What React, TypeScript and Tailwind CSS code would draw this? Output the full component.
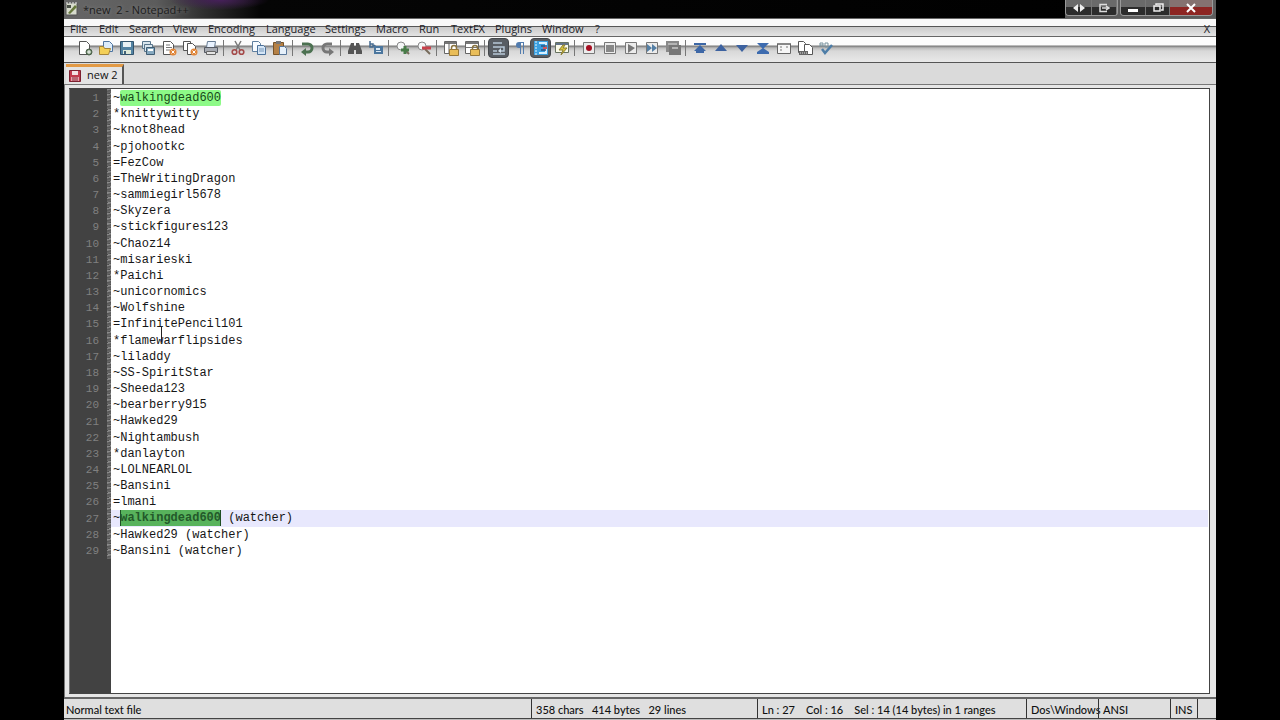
import React from "react";

const MENU: { label: string; width: string }[] = [
  { label: "File", width: "w-[29px]" },
  { label: "Edit", width: "w-[30px]" },
  { label: "Search", width: "w-[44px]" },
  { label: "View", width: "w-[35px]" },
  { label: "Encoding", width: "w-[58px]" },
  { label: "Language", width: "w-[59px]" },
  { label: "Settings", width: "w-[51px]" },
  { label: "Macro", width: "w-[43px]" },
  { label: "Run", width: "w-[32px]" },
  { label: "TextFX", width: "w-[44px]" },
  { label: "Plugins", width: "w-[47px]" },
  { label: "Window", width: "w-[53px]" },
  { label: "?", width: "w-[20px]" },
];

const LINES = [
  "~walkingdead600",
  "*knittywitty",
  "~knot8head",
  "~pjohootkc",
  "=FezCow",
  "=TheWritingDragon",
  "~sammiegirl5678",
  "~Skyzera",
  "~stickfigures123",
  "~Chaoz14",
  "~misarieski",
  "*Paichi",
  "~unicornomics",
  "~Wolfshine",
  "=InfinitePencil101",
  "*flamewarflipsides",
  "~liladdy",
  "~SS-SpiritStar",
  "~Sheeda123",
  "~bearberry915",
  "~Hawked29",
  "~Nightambush",
  "*danlayton",
  "~LOLNEARLOL",
  "~Bansini",
  "=lmani",
  "~walkingdead600 (watcher)",
  "~Hawked29 (watcher)",
  "~Bansini (watcher)",
];

const page = <path d="M2.500 1.500h7l3 3v10h-10z" fill="#fff" stroke="#555" />;
const square = <path d="M2.500 2.500h11v11h-11z" fill="#ececec" stroke="#777" />;
const lock = (
  <>
    <path d="M8.500 10V8a2.500 2.500 0 0 1 5 0v2" fill="none" stroke="#8a7440" strokeWidth="1.500" />
    <path d="M6.500 9.500h9v6h-9z" fill="#e9bd58" stroke="#96783a" />
  </>
);
const disk = (
  <>
    <path d="M1.500 1.500h13v13h-13z" fill="#5383a3" stroke="#33546d" />
    <path d="M4 2h8v5H4z" fill="#e8f1f5" />
    <path d="M4 10h8v4H4z" fill="#dfe9d9" />
    <path d="M5 11h2v3H5z" fill="#436277" />
  </>
);

type Tool = { name: string; art: React.ReactNode; pressed?: boolean };

const GROUPS: Tool[][] = [
  [
    { name: "New", art: <>{page}<circle cx="12" cy="12" r="3" fill="#6d8a6a" stroke="#4b5f4a" /><path d="M12 10v4M10 12h4" stroke="#fff" /></> },
    { name: "Open", art: <><path d="M5.500 1.500h6l3 3v7h-9z" fill="#dcecfb" stroke="#4f75a0" /><path d="M1.500 6.500h4l1 2h6l-2 6h-9z" fill="#f3cf57" stroke="#a5843a" /></> },
    { name: "Save", art: disk },
    { name: "Save all", art: <><path d="M2.500 1.500h8v7h-8z" fill="#d9e6ee" stroke="#58758b" /><path d="M4.500 4.500h8v7h-8z" fill="#d9e6ee" stroke="#58758b" /><path d="M6.500 7.500h8v7h-8z" fill="#86a9c0" stroke="#405d73" /><path d="M8 9h5v2H8z" fill="#fff" /></> },
    { name: "Close", art: <>{page}<path d="M5 5h4M5 7.500h6M5 10h4" stroke="#777" /><circle cx="12" cy="12" r="3.500" fill="#e08538" /><path d="m10.500 10.500 3 3m0-3-3 3" stroke="#fff" /></> },
    { name: "Close all", art: <><path d="M1.500 1.500h7v9h-7z" fill="#fff" stroke="#555" /><path d="M5.500 3.500h5l3 3v8h-8z" fill="#fff" stroke="#555" /><circle cx="12" cy="12" r="3.500" fill="#e08538" /><path d="m10.500 10.500 3 3m0-3-3 3" stroke="#fff" /></> },
    { name: "Print", art: <><path d="M4.500 1.500h8l-1 6h-8z" fill="#eaf3ff" stroke="#667b92" /><path d="M1.500 7.500h13v5h-13z" fill="#a6aab2" stroke="#555a63" /><path d="M3.500 11.500h9v3h-9z" fill="#e4e4e4" stroke="#666" /></> },
  ],
  [
    { name: "Cut", art: <><path d="m5 1 5 9m1-9-5 9" stroke="#777" strokeWidth="1.500" /><circle cx="4.500" cy="12" r="2.300" fill="none" stroke="#a44949" strokeWidth="1.600" /><circle cx="11.500" cy="12" r="2.300" fill="none" stroke="#a44949" strokeWidth="1.600" /></> },
    { name: "Copy", art: <><path d="M1.500 1.500h6l2 2v8h-8z" fill="#f7fbff" stroke="#5f7f9f" /><path d="M6.500 5.500h6l2 2v7h-8z" fill="#d4e5f6" stroke="#4b719a" /><path d="M8 9h5M8 11h5" stroke="#7797b8" /></> },
    { name: "Paste", art: <><path d="M1.500 2.500h10v12h-10z" fill="#b58146" stroke="#765229" /><path d="M4 1h5v3H4z" fill="#777" /><path d="M7.500 6.500h5l2 2v6h-7z" fill="#e6f0fa" stroke="#587699" /></> },
  ],
  [
    { name: "Undo", art: <><path d="M3 4h6a4 4 0 0 1 0 8H6" fill="none" stroke="#4c7151" strokeWidth="3" /><path d="M7 8v8l-5-4z" fill="#4c7151" /></> },
    { name: "Redo", art: <><path d="M12 4H7a4 4 0 0 0 0 8h3" fill="none" stroke="#777" strokeWidth="3" /><path d="M9 8v8l5-4z" fill="#777" /></> },
  ],
  [
    { name: "Find", art: <path d="M4 3h3v3h2V3h3l3 8v3H9v-4H7v4H1v-3z" fill="#555" /> },
    { name: "Replace", art: <><path d="M2 1v6h3V4H2m4 1 3 3" fill="none" stroke="#44698e" strokeWidth="1.500" /><path d="M6 6h9v8H6z" fill="#4b769e" /><path d="M8 8h4v2H8zm0 3h5v1H8z" fill="#dce9f5" /></> },
  ],
  [
    { name: "Zoom in", art: <><circle cx="6" cy="6" r="4" fill="#f4f6f7" stroke="#888" /><path d="m9 9 5 5" stroke="#776b5b" strokeWidth="2" /><path d="M10 6v8M6 10h8" stroke="#477b48" strokeWidth="3" /></> },
    { name: "Zoom out", art: <><circle cx="6" cy="6" r="4" fill="#f4f6f7" stroke="#888" /><path d="m9 9 5 5" stroke="#776b5b" strokeWidth="2" /><path d="M6 8h9" stroke="#c8414b" strokeWidth="3" /></> },
  ],
  [
    { name: "Synchronize vertical scrolling", art: <><path d="M1.500 1.500h12v12h-12z" fill="#fff" stroke="#666" /><path d="M2 2h11v2H2z" fill="#777" /><path d="M6 3v10" stroke="#666" />{lock}</> },
    { name: "Synchronize horizontal scrolling", art: <><path d="M1.500 1.500h13v12h-13z" fill="#fff" stroke="#666" /><path d="M2 2h12v2H2zM2 7h12v1H2z" fill="#777" />{lock}</> },
  ],
  [
    { name: "Word wrap", pressed: true, art: <><path d="M2 3h9M2 7h11v4H8M2 11h4M2 14h12" fill="none" stroke="#b7c8d8" strokeWidth="1.500" /><path d="m10 8-3 3 3 2z" fill="#d2dfeb" /></> },
    { name: "Show all characters", art: <path d="M12 2H7a3 3 0 0 0 0 6h1v6h1V3h2v11h1z" fill="#527cae" /> },
    { name: "Show indent guide", pressed: true, art: <><path d="M1 1h14v14H1z" fill="#3a9fe0" /><path d="M3 1v14" stroke="#e5f6ff" strokeDasharray="2 1" /><path d="M6 3h7v10H6" fill="none" stroke="#d5efff" strokeWidth="2" /><path d="M8 6h6M8 10h5" stroke="#2c5480" strokeWidth="1.500" /><path d="M10 7h4v2h-4z" fill="#d65359" /></> },
    { name: "User defined language", art: <><path d="M1.500 2.500h13v10h-13z" fill="#fbfbe9" stroke="#677260" /><path d="M2 3h12v2H2z" fill="#64758a" /><path d="m9 5-4 5h4l-2 5 6-7H9l2-3z" fill="#d9c63b" stroke="#8c7f32" /></> },
  ],
  [
    { name: "Start recording", art: <>{square}<circle cx="8" cy="8" r="3" fill="#a60f22" /></> },
    { name: "Stop recording", art: <>{square}<path d="M4 5h8v7H4z" fill="#888" /></> },
    { name: "Playback", art: <>{square}<path d="m5 4 7 4-7 5z" fill="#777" /></> },
    { name: "Run macro multiple times", art: <>{square}<path d="m3 4 5 4-5 4zm5 0 5 4-5 4z" fill="#547fa5" /></> },
    { name: "Save recorded macro", art: <><path d="M1 1h13v11H1z" fill="#888" /><path d="M4 5h12v10H4z" fill="#777" /><path d="M3 3h9v2H3zm4 4h6v2H7z" fill="#b4b4b4" /></> },
  ],
  [
    { name: "First", art: <path d="M2 3h12v2H2zm6 2 6 6h-2v2H4v-2H2z" fill="#3d67a6" /> },
    { name: "Previous", art: <path d="m8 4 6 7H2z" fill="#3d62a0" /> },
    { name: "Next", art: <path d="M2 5h12l-6 7z" fill="#3d62a0" /> },
    { name: "Last", art: <path d="M2 3h12L8 9zm6 5 6 4v2H2v-2z" fill="#3d6baf" /> },
    { name: "Window list", art: <><path d="M1.500 3.500h13v10h-13z" fill="#f6f6f6" stroke="#666" /><path d="M2 3h12v2H2z" fill="#888" /><path d="M4 7h2m4 0h2M4 10h2" stroke="#777" /></> },
    { name: "Compare", art: <><path d="M1.500 1.500h5l2 2v9h-7z" fill="#fff" stroke="#555" /><path d="M7.500 4.500h5l3 3v7h-8z" fill="#fff" stroke="#555" /><path d="M2 11h9v4H2z" fill="#666" /><path d="M3 13h7" stroke="#ddd" strokeDasharray="1 1" /></> },
    { name: "Spell check", art: <><path d="M2 7V3h3v4M2 5h3m2-2v4h3V3z" fill="none" stroke="#78929e" /><path d="m4 9 3 4 7-8" fill="none" stroke="#4d7da7" strokeWidth="2.500" /></> },
  ],
];

function ToolButton({ tool }: { tool: Tool }) {
  return (
    <button
      type="button"
      aria-label={tool.name}
      aria-pressed={tool.pressed}
      className={
        tool.pressed
          ? "flex h-5 w-[21px] items-center justify-center rounded-sm border border-[#45484c] bg-[#585d63]"
          : "flex h-5 w-[21px] items-center justify-center"
      }
    >
      <svg viewBox="0 0 16 16" className="h-4 w-4 shrink-0" aria-hidden="true">
        {tool.art}
      </svg>
    </button>
  );
}

function TitleBar() {
  const button = "flex items-center justify-center border-r border-[#777] bg-linear-to-b from-[#6a6a6a] from-50% to-[#2c2c2c] to-50%";
  return (
    <header className="flex h-[18px] items-stretch bg-[linear-gradient(90deg,#666,#5c5c5c_8%,#303030_12%,#050505_17%,#000)]">
      <div className="flex min-w-0 flex-1 items-center gap-1 bg-radial-[ellipse_50px_10px_at_155px_0px] from-[#46205a] to-transparent pl-px">
        <svg viewBox="0 0 14 16" className="h-4 w-3.5 shrink-0" aria-hidden="true">
          <path d="M1 2h11v12H1z" fill="#d8dccd" stroke="#555" />
          <path d="m3 12 7-8 2 2-7 7z" fill="#67793d" />
          <path d="M2 4h4v3H2z" fill="#4b5148" />
          <path d="M2 1v2m3-2v2m3-2v2m3-2v2" stroke="#eee" />
        </svg>
        <h1 className="truncate pt-0.5 pr-2 text-[11px] leading-4 text-[#1c1c1c] text-shadow-[0_0_4px_#888]">*new&nbsp; 2 - Notepad++</h1>
      </div>
      <div className="flex items-start bg-[#5c5c5c] pr-[3px]">
        <div className="flex h-4 overflow-hidden rounded-b border-x border-b border-[#999]">
          <button type="button" aria-label="Move to other monitor" className={`${button} w-[26px]`}>
            <svg viewBox="0 0 14 10" className="h-2.5 w-3.5" aria-hidden="true"><path d="M6 1v8L1 5zm2 0v8l5-4z" fill="#eee" /></svg>
          </button>
          <button type="button" aria-label="Send to monitor" className={`${button} w-[25px]`}>
            <svg viewBox="0 0 12 10" className="h-2.5 w-3" aria-hidden="true"><path d="M9 1.500H2v7h7M4 5h6M8 3l3 2-3 2" fill="none" stroke="#ddd" strokeWidth="1.500" /></svg>
          </button>
        </div>
        <div className="ml-0.5 flex h-4 overflow-hidden rounded-b border-x border-b border-[#999]">
          <button type="button" aria-label="Minimize" className={`${button} w-[25px]`}>
            <svg viewBox="0 0 12 10" className="h-2.5 w-3" aria-hidden="true"><path d="M1 6h10v3H1z" fill="#fff" /></svg>
          </button>
          <button type="button" aria-label="Restore" className={`${button} w-[24px]`}>
            <svg viewBox="0 0 12 10" className="h-2.5 w-3" aria-hidden="true"><path d="M4 2V1h7v6H9M2 3h6v5H2z" fill="none" stroke="#eee" strokeWidth="1.500" /></svg>
          </button>
          <button type="button" aria-label="Close" className="flex w-[42px] items-center justify-center bg-linear-to-b from-[#857270] from-50% to-[#8d2522] to-50%">
            <svg viewBox="0 0 12 10" className="h-2.5 w-3" aria-hidden="true"><path d="m2 1 8 8m0-8L2 9" stroke="#fff" strokeWidth="2" /></svg>
          </button>
        </div>
      </div>
    </header>
  );
}

function LineText({ text, index }: { text: string; index: number }) {
  if (index !== 0 && index !== 26) return <>{text}</>;
  const name = text.slice(1, 15);
  return (
    <>
      {text[0]}
      {index === 0 ? (
        <mark className="rounded-xs bg-[#8dfa87] py-px text-[#174717]">{name}</mark>
      ) : (
        <mark className="bg-[#58b35c] py-px font-bold text-[#23592a] inset-shadow-[1px_0_#1f4f24,-1px_0_#1f4f24]">{name}</mark>
      )}
      {text.slice(15)}
    </>
  );
}

function Editor() {
  return (
    <main className="relative min-h-0 flex-1 overflow-hidden border-y border-r border-[#444] bg-white">
      <div className="flex h-full">
        <div aria-hidden="true" className="w-[42px] shrink-0 border-l border-[#777] bg-[#424242]">
          <div className="flex h-[470px]">
            <div className="grid flex-1 auto-rows-fr pt-px pr-2 font-['Liberation_Mono',monospace] text-[11px] text-[#808080]">
              {LINES.map((_, i) => (
                <span key={i} className="flex items-center justify-end leading-4">{i + 1}</span>
              ))}
            </div>
            <div className="w-1 bg-[repeating-linear-gradient(165deg,#8a8a8a_0px,#8a8a8a_1px,#555_2px,#6a6a6a_4px,#484848_5px)]" />
          </div>
        </div>
        <div
          role="textbox"
          aria-label="new 2"
          aria-multiline="true"
          contentEditable
          suppressContentEditableWarning
          spellCheck={false}
          className="grid h-[470px] min-w-0 flex-1 auto-rows-fr pt-px pr-px font-['Liberation_Mono',monospace] text-[12px] text-[#161616] outline-none"
        >
          {LINES.map((line, i) => (
            <div key={line} className={i === 26 ? "bg-[#e8e8fd] pl-0.5 leading-4 whitespace-pre" : "pl-0.5 leading-4 whitespace-pre"}>
              <LineText text={line} index={i} />
            </div>
          ))}
        </div>
      </div>
      <span aria-hidden="true" className="absolute top-[237px] left-[92px] h-4 w-px bg-[#222]" />
    </main>
  );
}

function StatusBar() {
  const cell = "flex shrink-0 items-center border-l border-[#333] pt-1 pl-1";
  return (
    <footer className="flex h-5 items-stretch border-b border-[#444] bg-[#dfdfdf] font-['Lato','Open_Sans',sans-serif] text-[11px] font-medium whitespace-pre text-[#111]">
      <span className="flex min-w-0 flex-1 items-center pt-1 pl-0.5">Normal text file</span>
      <span className={`${cell} w-[226px]`}>358 chars   414 bytes   29 lines</span>
      <span className={`${cell} w-[269px]`}>Ln : 27    Col : 16    Sel : 14 (14 bytes) in 1 ranges</span>
      <span className={`${cell} w-[72px]`}>Dos\Windows</span>
      <span className={`${cell} w-[72px]`}>ANSI</span>
      <span className={`${cell} w-[27px]`}>INS</span>
      <span className={`${cell} w-[19px]`} />
    </footer>
  );
}

export default function App() {
  return (
    <div className="h-screen overflow-hidden bg-black px-[5%] font-['Open_Sans',sans-serif]">
      <div className="flex h-full flex-col bg-[#dadada]">
        <TitleBar />
        <nav aria-label="Main menu" className="flex h-[19px] items-center border-t border-b border-[#666] bg-[linear-gradient(#f8f8f8_7px,#555_7px,#555_8px,#cacaca_8px,#e4e4e4)] pt-0.5 pl-1.5 text-[11px] font-medium text-[#1c1c28]">
          {MENU.map((item) => (
            <button key={item.label} type="button" className={`${item.width} text-left leading-4 whitespace-nowrap`}>
              {item.label}
            </button>
          ))}
          <button type="button" aria-label="Close document" className="mr-1.5 ml-auto leading-4">X</button>
        </nav>
        <div role="toolbar" aria-label="Tools" className="flex h-[26px] items-center border-b border-[#555] bg-[linear-gradient(#fcfcfc_8px,#777_9px,#bcbcbc_11px,#d8d8d8_14px,#e9e9e9)] pr-1 pb-1 pl-[10px]">
          {GROUPS.map((group, i) => (
            <React.Fragment key={i}>
              {i > 0 && <span className="mx-[2px] h-4 w-[2px] border-l border-[#777]" />}
              {group.map((tool) => (
                <ToolButton key={tool.name} tool={tool} />
              ))}
            </React.Fragment>
          ))}
        </div>
        <div className="flex h-[22px] items-stretch border-b border-[#777] pt-px pl-0.5">
          <button type="button" className="flex w-[58px] items-center gap-1.5 border-t-3 border-r-2 border-t-[#e39a45] border-r-[#555] bg-[#e4e4e4] pl-[3px] text-[11px] font-medium whitespace-pre text-[#111]">
            <svg viewBox="0 0 12 12" className="h-3 w-3 shrink-0" aria-hidden="true">
              <path d="M.5.5h11v11H.5z" fill="#c23a4d" stroke="#7d2030" />
              <path d="M3 1h6v4H3z" fill="#f3dfe2" />
              <path d="M2 7h8v4H2z" fill="#e5a5ae" />
              <path d="M3 8h6M3 10h6" stroke="#8c2738" />
            </svg>
            new 2
          </button>
        </div>
        <div className="flex min-h-0 flex-1 flex-col border-l border-[#777] bg-[#e6e6e6] pt-[3px] pr-1.5 pb-[3px] pl-1">
          <Editor />
        </div>
        <div className="h-0.5 bg-[#666]" />
        <StatusBar />
        <div className="h-px bg-[#bbb]" />
      </div>
    </div>
  );
}
